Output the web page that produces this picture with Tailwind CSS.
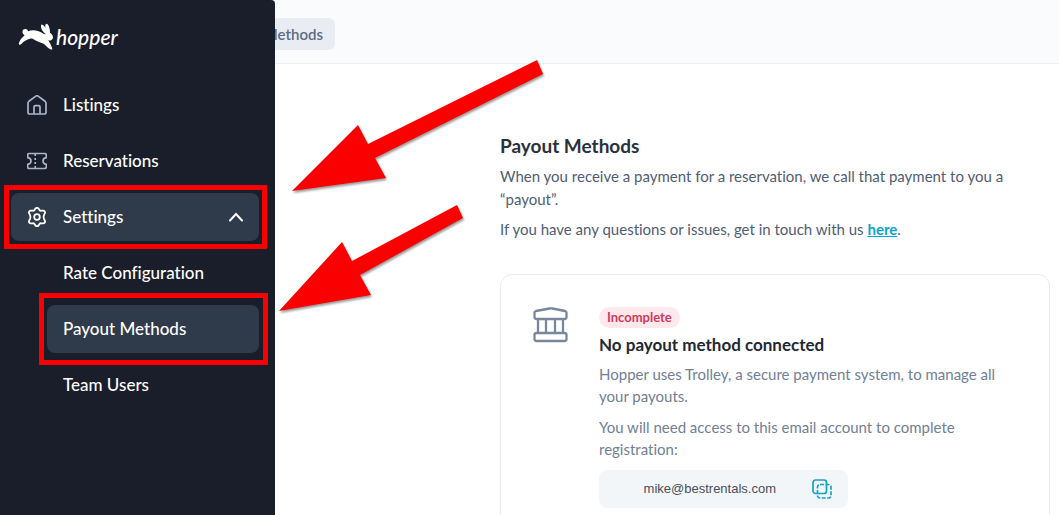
<!DOCTYPE html>
<html lang="en">
<head>
  <meta charset="UTF-8">
  <meta name="viewport" content="width=device-width, initial-scale=1.0">
  <title>Payout Methods | Hopper</title>
  <script src="https://cdn.jsdelivr.net/npm/@tailwindcss/browser@4"></script>
</head>
<body class="relative min-h-screen overflow-x-hidden bg-white font-['Lato',sans-serif] text-[15px] text-[#4f5d75] [font-variant-ligatures:none]">

  <!-- Sidebar drawer, sits over the page -->
  <aside class="fixed inset-y-0 left-0 z-10 w-[275px] rounded-tr bg-[#191e2a] text-[17px] font-medium text-white">
    <a href="#" class="ml-[18px] mt-[21px] flex h-8 items-center gap-0.5">
      <svg class="h-7 w-9" viewBox="54 72 108 84" fill="#fff" aria-hidden="true">
        <path d="M56 134C60 123 66 115 74 109C65 104 66 92 73 91C79 88 84 92 84 97C98 90 118 95 132 105L138 106C127 98 120 84 124 77C130 75 138 88 142 98C136 88 133 77 139 74C146 74 150 88 150 101C157 105 161 113 158 119C155 124 149 125 145 124C150 133 156 143 157 151C151 155 142 143 131 134C120 129 109 127 103 122C99 119 94 117 90 119C80 121 71 127 65 134C61 138 57 138 56 134Z"/>
      </svg>
      <span class="font-['Lato',cursive] text-[21px] leading-6 italic">hopper</span>
    </a>

    <nav class="mt-7 pl-[11px] pr-4">
      <a href="#" class="flex h-12 items-center gap-4 rounded-lg pl-4">
        <svg class="h-5 w-5 text-[#a9b6c8]" viewBox="0 0 20 20" fill="none" stroke="currentColor" stroke-width="1.7" stroke-linejoin="round" aria-hidden="true">
          <path d="M1 8.2C1 7.4 1.3 6.8 1.9 6.3L8.9 1.1C9.6.6 10.4.6 11.1 1.1L18.1 6.3C18.7 6.8 19 7.4 19 8.2V17.2C19 18.3 18.2 19 17.2 19H2.8C1.8 19 1 18.3 1 17.2Z"/>
          <path d="M7 19V12C7 11.2 7.5 10.7 8.3 10.7H11.7C12.5 10.7 13 11.2 13 12V19"/>
        </svg>
        Listings
      </a>
      <a href="#" class="mt-2 flex h-12 items-center gap-4 rounded-lg pl-4">
        <svg class="h-5 w-5 text-[#a9b6c8]" viewBox="0 0 20 20" fill="none" stroke="currentColor" stroke-width="1.7" stroke-linejoin="round" aria-hidden="true">
          <path d="M2.2 2.5H17.8C18.7 2.5 19.3 3.1 19.3 4V6.7C17.2 7 16 8.3 16 10C16 11.7 17.2 13 19.3 13.3V16C19.3 16.9 18.7 17.5 17.8 17.5H2.2C1.3 17.5.7 16.9.7 16V13.3C2.8 13 4 11.7 4 10C4 8.3 2.8 7 .7 6.7V4C.7 3.1 1.3 2.5 2.2 2.5Z"/>
          <path d="M8.2 3V17" stroke-dasharray="2 2"/>
        </svg>
        Reservations
      </a>
      <div class="relative mt-2">
        <button type="button" aria-expanded="true" class="flex h-12 w-full items-center gap-4 rounded-lg bg-[#2f3a4b] pl-4 pr-[15px]">
          <svg class="h-5 w-5" viewBox="0 0 20 20" fill="none" stroke="currentColor" stroke-width="1.8" stroke-linejoin="round" aria-hidden="true">
            <path d="M8.4 1.6C9.2.5 10.8.5 11.6 1.6L12.5 2.9C12.9 3.5 13.6 3.8 14.3 3.7L16.1 3.6C17.6 3.6 18.5 5 17.9 6.2L17 8.1C16.5 9.3 16.5 10.7 17 11.9L17.9 13.8C18.5 15 17.6 16.4 16.1 16.4L14.3 16.3C13.6 16.2 12.9 16.5 12.5 17.1L11.6 18.4C10.8 19.5 9.2 19.5 8.4 18.4L7.5 17.1C7.1 16.5 6.4 16.2 5.7 16.3L3.9 16.4C2.4 16.4 1.5 15 2.1 13.8L3 11.9C3.5 10.7 3.5 9.3 3 8.1L2.1 6.2C1.5 5 2.4 3.6 3.9 3.6L5.7 3.7C6.4 3.8 7.1 3.5 7.5 2.9Z"/>
            <circle cx="10" cy="10" r="2.8"/>
          </svg>
          Settings
          <svg class="ml-auto h-4 w-4" viewBox="0 0 16 16" fill="none" stroke="currentColor" stroke-width="2" stroke-linecap="round" aria-hidden="true">
            <path d="M2 11.5L8 5L14 11.5"/>
          </svg>
        </button>
        <div class="pointer-events-none absolute -left-[7px] -right-2 -inset-y-2 border-[5px] border-[#fa0000]"></div>
      </div>
      <a href="#" class="mt-2 ml-9 flex h-12 items-center rounded-lg pl-4">Rate Configuration</a>
      <div class="relative mt-2 ml-9">
        <a href="#" aria-current="page" class="flex h-12 items-center rounded-lg bg-[#2f3a4b] pl-4">Payout Methods</a>
        <div class="pointer-events-none absolute -left-2 -right-[9px] -inset-y-3 border-[5px] border-[#fa0000]"></div>
      </div>
      <a href="#" class="mt-2 ml-9 flex h-12 items-center rounded-lg pl-4">Team Users</a>
    </nav>
  </aside>

  <header class="flex h-16 items-center border-b border-[#eceff4] bg-[#fafbfd] pl-[210px] pt-1">
    <a href="#" class="w-[125px] rounded-md bg-[#e9edf3] py-1.5 pr-3 text-right font-semibold leading-5 text-[#5c6b85]">Payout Methods</a>
  </header>

  <main class="pl-[500px] pr-[9px]">
    <h1 class="mt-[70px] text-[19px] font-bold leading-6 text-[#2a303c]">Payout Methods</h1>
    <p class="mt-[7px] leading-[23px]">When you receive a payment for a reservation, we call that payment to you a “payout”.</p>
    <p class="mt-[7px] leading-[23px]">If you have any questions or issues, get in touch with us <a href="#" class="font-bold text-[#0aa5cf] underline">here</a>.</p>

    <section class="mt-[33px] flex gap-[30px] rounded-xl border border-[#e8ebf0] px-8 pt-8 pb-10">
      <svg class="h-9 w-9 shrink-0 text-[#77879c]" viewBox="0 0 36 36" fill="none" stroke="currentColor" stroke-width="2.3" stroke-linejoin="round" aria-hidden="true">
        <path d="M1.5 5.8C1.5 4.9 2 4.3 2.9 4L16.5 1.5C17.5 1.3 18.5 1.3 19.5 1.5L32.1 4C33 4.3 33.5 4.9 33.5 5.8V10C33.5 11.2 32.7 12 31.5 12H3.5C2.3 12 1.5 11.2 1.5 10Z"/>
        <path d="M5 12V26M13 12V26M22 12V26M30 12V26"/>
        <rect x="1.5" y="26" width="32" height="8" rx="2"/>
      </svg>
      <div class="min-w-0">
        <span class="block w-fit rounded-full bg-[#fde8ec] px-2 text-[13px] font-bold leading-[21px] text-[#cf3a5c]">Incomplete</span>
        <h2 class="mt-[5px] text-[17px] font-bold leading-6 text-[#222833]">No payout method connected</h2>
        <div class="mt-1.5 space-y-[9px] leading-[22px] text-[#718096]">
          <p>Hopper uses Trolley, a secure payment system, to manage all your payouts.</p>
          <p>You will need access to this email account to complete registration:</p>
        </div>
        <div class="mt-2.5 flex h-[38px] w-[249px] items-center justify-end gap-9 rounded-lg bg-[#f3f6f9] pr-4 font-['Liberation_Sans',sans-serif] text-[13px] text-[#4a4f58]">
          <span>mike@bestrentals.com</span>
          <button type="button" aria-label="Copy email" class="text-[#14a3c4]">
            <svg class="h-5 w-5" viewBox="0 0 20 20" fill="none" stroke="currentColor" stroke-width="1.7" aria-hidden="true">
              <rect x="1" y="1" width="13.5" height="13.5" rx="2.5"/>
              <rect x="5.5" y="5.5" width="13.5" height="13.5" rx="2.5" stroke-dasharray="4 1.5"/>
            </svg>
          </button>
        </div>
      </div>
    </section>
  </main>

  <!-- Callout arrows -->
  <svg class="pointer-events-none absolute left-0 top-0 z-20 h-[330px] w-[560px] drop-shadow-[1px_2px_1px_rgba(0,0,0,0.4)]" viewBox="0 0 560 330" fill="#fa0000" aria-hidden="true">
    <path d="M292 191L358 125L368 144L537 60L543 74L375 158L386 178Z"/>
    <path d="M279 311L342 242L352 261L457 205L463 218L360 275L371 295Z"/>
  </svg>
</body>
</html>
